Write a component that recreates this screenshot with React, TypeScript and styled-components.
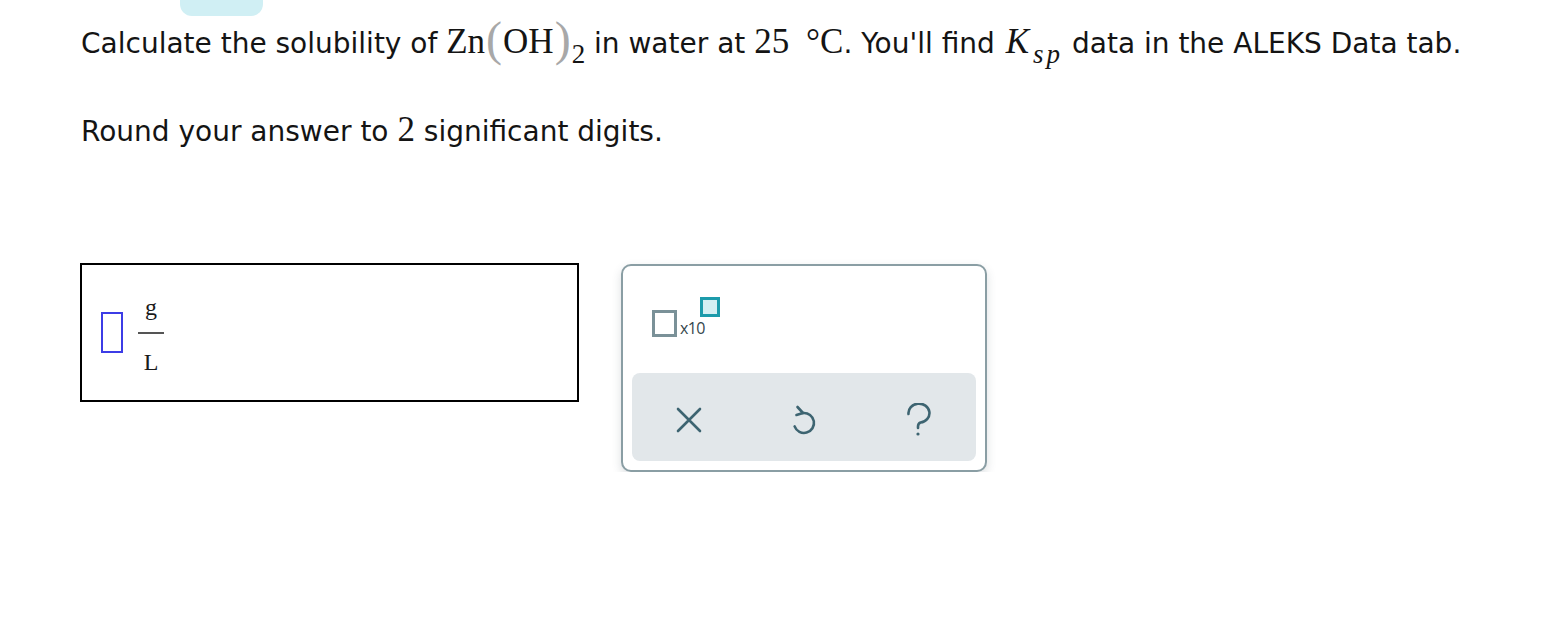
import React from "react";
import styled, { createGlobalStyle } from "styled-components";

const Global = createGlobalStyle`
  html, body { margin: 0; padding: 0; background: #ffffff; }
  body { font-family: "DejaVu Sans", Verdana, sans-serif; color: #111; }
`;

const Page = styled.div`
  display: flex;
  flex-direction: column;
  padding-left: 80px;
`;

const Tab = styled.div`
  width: 83px;
  height: 16px;
  margin-left: 100px;
  background: #d0eff4;
  border-radius: 0 0 12px 12px;
`;

const Line = styled.p<{ $top: number }>`
  margin: ${(p) => p.$top}px 0 0 1px;
  height: 40px;
  font-size: 28px;
  line-height: 40px;
  white-space: nowrap;
  color: #141414;
`;

const M = styled.span<{ $italic?: boolean; $gap?: number }>`
  font-family: "Liberation Serif", "Times New Roman", serif;
  font-size: 35px;
  line-height: 0;
  font-style: ${(p) => (p.$italic ? "italic" : "normal")};
  margin-left: ${(p) => p.$gap ?? 0}px;
`;

const Paren = styled.span`
  font-family: "Liberation Serif", serif;
  font-size: 48px;
  line-height: 0;
  color: #a8a8a8;
  display: inline-block;
  transform: translateY(2px);
  margin: 0 1px;
`;

const Sub = styled.span<{ $italic?: boolean; $spacing?: number; $gap?: number }>`
  font-family: "Liberation Serif", "Times New Roman", serif;
  font-size: 27px;
  line-height: 0;
  position: relative;
  top: 10px;
  font-style: ${(p) => (p.$italic ? "italic" : "normal")};
  letter-spacing: ${(p) => p.$spacing ?? 0}px;
  margin-left: ${(p) => p.$gap ?? 0}px;
`;

const AnswerRow = styled.div`
  display: flex;
  align-items: flex-start;
  margin-top: 111px;
`;

const AnswerBox = styled.div`
  box-sizing: border-box;
  width: 499px;
  height: 139px;
  border: 2px solid #000;
  display: flex;
  align-items: center;
  padding-left: 19px;
`;

const Placeholder = styled.div`
  box-sizing: border-box;
  width: 22px;
  height: 41px;
  border: 2px solid #3c3ce6;
`;

const Fraction = styled.div`
  display: flex;
  flex-direction: column;
  align-items: center;
  margin-left: 15px;
  padding-top: 4px;
  font-family: "Liberation Serif", serif;
  font-size: 24px;
  color: #1a1a1a;
`;

const FracPart = styled.span`
  line-height: 24px;
  height: 24px;
`;

const FracBar = styled.div`
  width: 26px;
  height: 2px;
  background: #555;
  margin: 13px 0 16px;
`;

const Panel = styled.div`
  box-sizing: border-box;
  width: 366px;
  height: 208px;
  margin: 1px 0 0 42px;
  border: 2px solid #8a9ea4;
  border-radius: 10px;
  box-shadow: 0 4px 10px rgba(60, 80, 90, 0.18);
  display: flex;
  flex-direction: column;
  justify-content: space-between;
  padding: 31px 9px 9px;
  background: #fff;
`;

const SciRow = styled.div`
  display: flex;
  align-items: flex-end;
  margin-left: 20px;
  height: 40px;
`;

const BaseSquare = styled.div`
  box-sizing: border-box;
  width: 25px;
  height: 27px;
  border: 3px solid #7a9198;
`;

const Ten = styled.span`
  font-family: "Open Sans", "DejaVu Sans", sans-serif;
  font-size: 16px;
  line-height: 16px;
  color: #34464c;
  margin-left: 3px;
  margin-bottom: 1px;
  letter-spacing: -0.6px;
`;

const ExpSquare = styled.div`
  box-sizing: border-box;
  width: 20px;
  height: 20px;
  border: 3px solid #1c9bab;
  background: #d3eff3;
  align-self: flex-start;
  margin-left: -5px;
`;

const ButtonBar = styled.div`
  height: 88px;
  border-radius: 8px;
  background: #e2e7ea;
  display: grid;
  grid-template-columns: repeat(3, 1fr);
  align-items: center;
  justify-items: center;
`;

const IconButton = styled.button`
  border: none;
  background: transparent;
  padding: 0;
  display: flex;
  align-items: center;
  justify-content: center;
  margin-top: 6px;
  color: #3d6471;
`;

export default function App() {
  return (
    <>
      <Global />
      <Page>
        <Tab />
        <Line $top={8}>
          Calculate the solubility of <M>Zn</M>
          <Paren>(</Paren>
          <M>OH</M>
          <Paren>)</Paren>
          <Sub>2</Sub> in water at <M>25</M> <M $gap={8}>°C</M>. You'll find{" "}
          <M $italic $gap={2}>K</M>
          <Sub $italic $spacing={3} $gap={4}>
            sp
          </Sub>{" "}
          data in the ALEKS Data tab.
        </Line>
        <Line $top={48}>
          Round your answer to <M>2</M> significant digits.
        </Line>
        <AnswerRow>
          <AnswerBox>
            <Placeholder />
            <Fraction>
              <FracPart>g</FracPart>
              <FracBar />
              <FracPart>L</FracPart>
            </Fraction>
          </AnswerBox>
          <Panel>
            <SciRow>
              <BaseSquare />
              <Ten>x10</Ten>
              <ExpSquare />
            </SciRow>
            <ButtonBar>
              <IconButton aria-label="clear">
                <svg width="26" height="26" viewBox="0 0 26 26" fill="none" stroke="currentColor" strokeWidth="2.6" strokeLinecap="round">
                  <path d="M2 2 L24 24 M24 2 L2 24" />
                </svg>
              </IconButton>
              <IconButton aria-label="undo">
                <svg width="26" height="32" viewBox="0 0 26 32" fill="none" stroke="currentColor" strokeWidth="2.6" strokeLinecap="round" strokeLinejoin="round">
                  <path d="M12 9 A10 10 0 1 1 3.6 22.4" />
                  <path d="M6.5 3 L12 9 L5.5 11" />
                </svg>
              </IconButton>
              <IconButton aria-label="help">
                <svg width="26" height="34" viewBox="0 0 26 34" fill="none" stroke="currentColor" strokeWidth="2.6" strokeLinecap="round" strokeLinejoin="round">
                  <path d="M2.5 11 A10.5 9.5 0 1 1 14.5 19.5 Q12 20.5 12 23.5 L12 25" />
                  <circle cx="12" cy="31" r="1.6" fill="currentColor" stroke="none" />
                </svg>
              </IconButton>
            </ButtonBar>
          </Panel>
        </AnswerRow>
      </Page>
    </>
  );
}
